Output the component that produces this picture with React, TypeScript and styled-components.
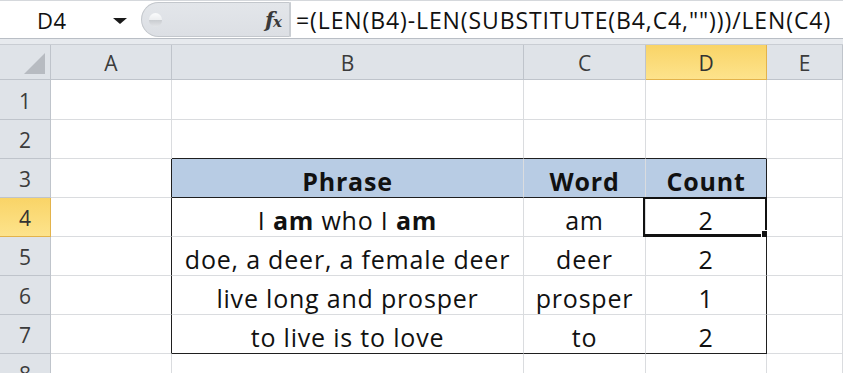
import React from "react";
import styled, { createGlobalStyle, css } from "styled-components";

const Global = createGlobalStyle`
  html, body { margin: 0; padding: 0; background: #ffffff; overflow: hidden; }
  body { font-family: "Open Sans", "Liberation Sans", sans-serif; }
`;

const Page = styled.div`
  width: 843px;
  height: 373px;
  display: flex;
  flex-direction: column;
  background: #fff;
  overflow: hidden;
  & > * {
    flex-shrink: 0;
  }
`;

const FormulaBar = styled.div`
  height: 37px;
  display: flex;
  align-items: stretch;
  border-top: 1px solid #d5d8dc;
  border-bottom: 1px solid #b9bec5;
  background: #fff;
`;

const NameBox = styled.div`
  width: 141px;
  display: flex;
  align-items: center;
  padding-left: 37px;
  box-sizing: border-box;
  font-size: 22px;
  letter-spacing: 0.5px;
  color: #111;
  position: relative;
`;

const Arrow = styled.div`
  position: absolute;
  left: 113px;
  top: 17px;
  width: 0;
  height: 0;
  border-left: 7px solid transparent;
  border-right: 7px solid transparent;
  border-top: 6px solid #1a1a1a;
`;

const Pill = styled.div`
  width: 150px;
  margin: 1px 0;
  border: 1px solid #c3c7cc;
  border-right: 2px solid #c9cdd2;
  border-radius: 18px 0 0 18px;
  background: linear-gradient(#e3e6ea, #dcdfe4);
  display: flex;
  align-items: center;
  justify-content: space-between;
  padding: 0 8px 0 7px;
  box-sizing: border-box;
`;

const Knob = styled.div`
  width: 13px;
  height: 14px;
  border-radius: 7px;
  background: linear-gradient(#fafbfc 0%, #eceef0 50%, #c9ccd0 51%, #e3e5e8 100%);
`;

const Fx = styled.span`
  font-family: "DejaVu Serif", "Liberation Serif", serif;
  font-style: italic;
  font-weight: bold;
  font-size: 21px;
  color: #3a3a3a;
  letter-spacing: -1px;
  & > small {
    font-size: 15px;
  }
`;

const FormulaInput = styled.div`
  flex: 1;
  display: flex;
  align-items: center;
  padding-left: 5px;
  font-size: 23px;
  letter-spacing: 0.9px;
  color: #111;
  white-space: nowrap;
`;

const Strip = styled.div`
  height: 5px;
  background: #e7eaee;
  border-bottom: 1px solid #c9cdd3;
`;

const Grid = styled.div`
  display: grid;
  grid-template-columns: 51px 121px 352px 122px 121px 1fr;
  grid-auto-rows: 39px;
  grid-template-rows: 35px 40px;
`;

const HeaderCell = styled.div<{ $active?: boolean }>`
  box-sizing: border-box;
  background: #dfe3e8;
  border-right: 1px solid #bfc4cb;
  border-bottom: 1px solid #bfc4cb;
  display: flex;
  align-items: center;
  justify-content: center;
  font-size: 21px;
  color: #3b3b3b;
  position: relative;
  padding-top: 2px;
  ${(p) =>
    p.$active &&
    css`
      background: linear-gradient(#f9d467, #fde38c);
      border-right-color: #e3b34b;
      border-bottom-color: #e3b34b;
      color: #333;
    `}
`;

const Corner = styled.div`
  position: absolute;
  right: 5px;
  bottom: 5px;
  width: 0;
  height: 0;
  border-left: 21px solid transparent;
  border-bottom: 21px solid #b7bbc1;
`;

const Cell = styled.div<{
  $rDark?: boolean;
  $bDark?: boolean;
  $fill?: boolean;
  $bold?: boolean;
}>`
  box-sizing: border-box;
  border-right: 1px solid ${(p) => (p.$rDark ? "#1f1f1f" : "#dadcdf")};
  border-bottom: 1px solid ${(p) => (p.$bDark ? "#1f1f1f" : "#dadcdf")};
  background: ${(p) => (p.$fill ? "#b8cce4" : "#fff")};
  display: flex;
  align-items: center;
  justify-content: center;
  font-size: 25px;
  letter-spacing: 0.8px;
  font-weight: ${(p) => (p.$bold ? 700 : 400)};
  color: #111;
  white-space: nowrap;
  position: relative;
  padding-top: 5px;
`;

const Selection = styled.div`
  position: absolute;
  left: -3px;
  top: -1px;
  right: -1px;
  bottom: -1px;
  border: 2px solid #111;
  border-bottom-width: 3px;
  pointer-events: none;
`;

const Handle = styled.div`
  position: absolute;
  right: -4px;
  bottom: -4px;
  width: 6px;
  height: 6px;
  background: #111;
  border: 1px solid #fff;
`;

const columns = ["A", "B", "C", "D", "E"];

type Row = { n: number; b?: React.ReactNode; c?: string; d?: string };

const rows: Row[] = [
  { n: 1 },
  { n: 2 },
  { n: 3, b: "Phrase", c: "Word", d: "Count" },
  {
    n: 4,
    b: (
      <>
        I&nbsp;<b>am</b>&nbsp;who I&nbsp;<b>am</b>
      </>
    ),
    c: "am",
    d: "2",
  },
  { n: 5, b: "doe, a deer, a female deer", c: "deer", d: "2" },
  { n: 6, b: "live long and prosper", c: "prosper", d: "1" },
  { n: 7, b: "to live is to love", c: "to", d: "2" },
  { n: 8 },
];

export default function App() {
  return (
    <Page>
      <Global />
      <FormulaBar>
        <NameBox>
          D4
          <Arrow />
        </NameBox>
        <Pill>
          <Knob />
          <Fx>
            f<small>x</small>
          </Fx>
        </Pill>
        <FormulaInput>=(LEN(B4)-LEN(SUBSTITUTE(B4,C4,"")))/LEN(C4)</FormulaInput>
      </FormulaBar>
      <Strip />
      <Grid>
        <HeaderCell>
          <Corner />
        </HeaderCell>
        {columns.map((c) => (
          <HeaderCell key={c} $active={c === "D"}>
            {c}
          </HeaderCell>
        ))}
        {rows.map((r) => {
          const inTable = r.n >= 3 && r.n <= 7;
          const dark = r.n === 2 || r.n === 3 || r.n === 7;
          const head = r.n === 3;
          return (
            <React.Fragment key={r.n}>
              <HeaderCell $active={r.n === 4}>{r.n}</HeaderCell>
              <Cell $rDark={inTable} />
              <Cell $bDark={dark} $fill={head} $bold={head}>
                {r.b}
              </Cell>
              <Cell $bDark={dark} $fill={head} $bold={head}>
                {r.c}
              </Cell>
              <Cell $rDark={inTable} $bDark={dark} $fill={head} $bold={head}>
                {r.d}
                {r.n === 4 && (
                  <Selection>
                    <Handle />
                  </Selection>
                )}
              </Cell>
              <Cell />
            </React.Fragment>
          );
        })}
      </Grid>
    </Page>
  );
}
